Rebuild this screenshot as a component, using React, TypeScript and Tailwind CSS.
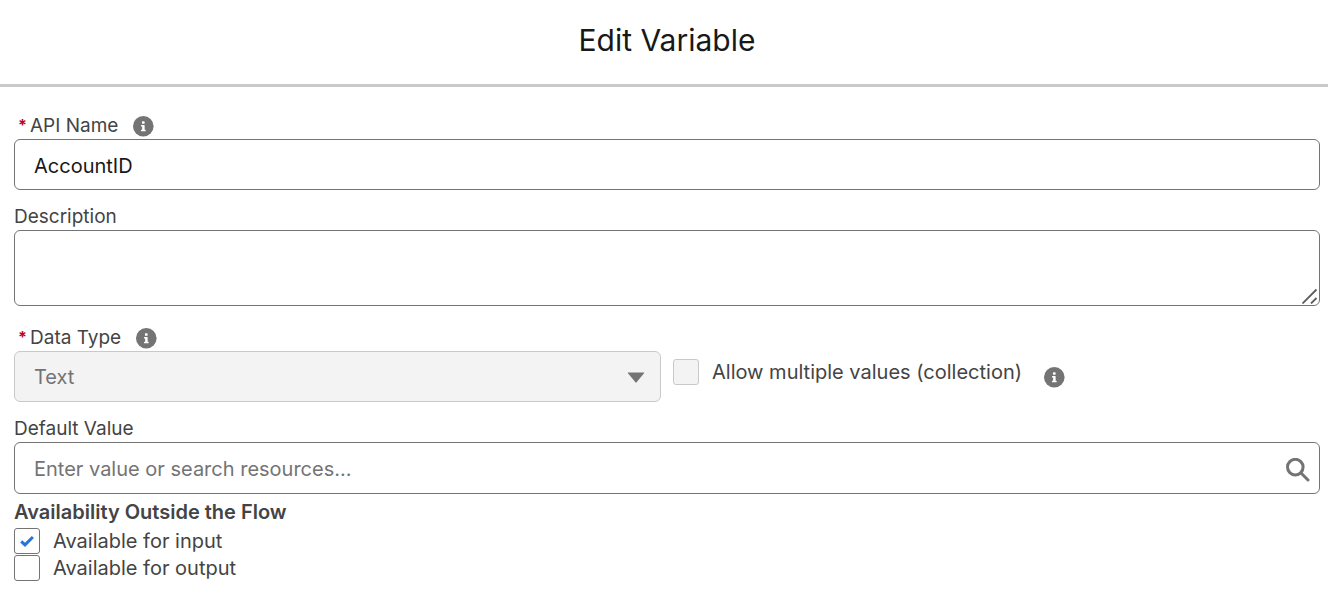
import { useState, type ReactNode } from "react";

const fieldClass =
  "block w-full rounded-md border border-[#747474] bg-white px-[19px] text-xl text-[#181818] placeholder:text-[#747474] placeholder:opacity-100";

function InfoButton({ label, className = "" }: { label: string; className?: string }) {
  return (
    <button type="button" aria-label={label} className={`flex size-[21px] shrink-0 ${className}`}>
      <svg viewBox="0 0 20 20" className="size-[21px]" aria-hidden="true">
        <circle cx="9.8" cy="9.8" r="9.8" fill="#747474" />
        <rect x="8.5" y="4.9" width="2.6" height="2.5" rx="0.8" fill="#fff" />
        <path
          d="M8.1 8.5h2.5c.3 0 .5.2.5.5v4h.5c.3 0 .5.2.5.5v.5c0 .3-.2.5-.5.5H8.1c-.3 0-.5-.2-.5-.5v-.5c0-.3.2-.5.5-.5h.6v-3h-.6c-.3 0-.5-.2-.5-.5V9c0-.3.2-.5.5-.5z"
          fill="#fff"
        />
      </svg>
    </button>
  );
}

function FieldLabel({
  htmlFor,
  required = false,
  info,
  children,
}: {
  htmlFor: string;
  required?: boolean;
  info?: string;
  children: ReactNode;
}) {
  return (
    <div className="flex h-[26px] items-center gap-[15px]">
      <label htmlFor={htmlFor} className="flex text-[19px] leading-6 text-[#444444]">
        {required && (
          <span aria-hidden="true" className="w-4 pl-1 text-base leading-[22px] font-bold text-[#ba0517]">
            *
          </span>
        )}
        {children}
      </label>
      {info && <InfoButton label={info} />}
    </div>
  );
}

function CheckOption({
  label,
  checked,
  disabled = false,
  onChange,
}: {
  label: string;
  checked: boolean;
  disabled?: boolean;
  onChange?: (value: boolean) => void;
}) {
  return (
    <label className="flex items-start gap-[13px] text-xl leading-[27px] text-[#444444]">
      <span className="grid shrink-0 place-items-center">
        <input
          type="checkbox"
          checked={checked}
          disabled={disabled}
          onChange={(e) => onChange?.(e.target.checked)}
          className="col-start-1 row-start-1 size-[26px] appearance-none rounded-[3px] border border-[#747474] bg-white disabled:border-[#c9c9c9] disabled:bg-[#f3f3f3]"
        />
        {checked && (
          <svg
            viewBox="0 0 14 12"
            className="pointer-events-none col-start-1 row-start-1 h-3 w-3.5"
            fill="none"
            stroke="#2574d9"
            strokeWidth="3"
            aria-hidden="true"
          >
            <path d="M1.2 6.4 5 9.9 12.9 2" />
          </svg>
        )}
      </span>
      {label}
    </label>
  );
}

export default function App() {
  const [name, setName] = useState("AccountID");
  const [description, setDescription] = useState("");
  const [value, setValue] = useState("");
  const [input, setInput] = useState(true);
  const [output, setOutput] = useState(false);

  return (
    <main className="min-h-screen bg-white font-['Inter',sans-serif]">
      <header className="border-b-3 border-[#c9c9c9] pt-5 pb-6 pl-1.5">
        <h1 className="text-center text-3xl leading-10 text-[#181818]">Edit Variable</h1>
      </header>

      <form className="pt-[26px] pr-2 pb-4 pl-3.5" onSubmit={(e) => e.preventDefault()}>
        <FieldLabel htmlFor="api-name" required info="API Name help">
          API Name
        </FieldLabel>
        <input
          id="api-name"
          required
          value={name}
          onChange={(e) => setName(e.target.value)}
          className={`${fieldClass} h-[51px] pt-0.5`}
        />

        <div className="mt-3.5">
          <FieldLabel htmlFor="description">Description</FieldLabel>
          <div className="relative">
            <textarea
              id="description"
              value={description}
              onChange={(e) => setDescription(e.target.value)}
              className={`${fieldClass} h-[76px] resize-none py-3`}
            />
            <svg
              viewBox="0 0 16 16"
              className="pointer-events-none absolute right-0.5 bottom-0.5 size-4"
              stroke="#5c5c5c"
              strokeWidth="1.8"
              aria-hidden="true"
            >
              <path d="M.5 15.5l14-14M9 15.5l5.5-5.5" />
            </svg>
          </div>
        </div>

        <div className="mt-[19px] grid grid-cols-2 gap-3">
          <div>
            <FieldLabel htmlFor="data-type" required info="Data Type help">
              Data Type
            </FieldLabel>
            <div className="relative">
              <select
                id="data-type"
                disabled
                defaultValue="Text"
                className="block h-[51px] w-full appearance-none rounded-md border border-[#c9c9c9] bg-[#f3f3f3] px-[19px] text-xl text-[#747474] opacity-100"
              >
                <option>Text</option>
              </select>
              <svg
                viewBox="0 0 18 11"
                className="pointer-events-none absolute top-[21px] right-4 h-[11px] w-[18px]"
                aria-hidden="true"
              >
                <path d="M1.3.5h15.4q.9 0 .3.8L9.6 10.2q-.6.7-1.2 0L1 1.3Q.4.5 1.3.5z" fill="#747474" />
              </svg>
            </div>
          </div>
          <div className="flex items-start gap-[22px] pt-[34px]">
            <CheckOption label="Allow multiple values (collection)" checked={false} disabled />
            <InfoButton label="Allow multiple values help" className="mt-2" />
          </div>
        </div>

        <div className="mt-3.5">
          <FieldLabel htmlFor="default-value">Default Value</FieldLabel>
          <div className="relative">
            <input
              id="default-value"
              value={value}
              onChange={(e) => setValue(e.target.value)}
              placeholder="Enter value or search resources..."
              className={`${fieldClass} h-[52px] pt-0.5 pr-12`}
            />
            <svg
              viewBox="0 0 24 24"
              className="pointer-events-none absolute top-4 right-2.5 size-6"
              fill="none"
              stroke="#747474"
              strokeWidth="3"
              strokeLinecap="round"
              aria-hidden="true"
            >
              <circle cx="9.3" cy="9.1" r="7.8" />
              <path d="m15 15 7 7" />
            </svg>
          </div>
        </div>

        <fieldset className="mt-1.5">
          <legend className="text-xl leading-6 font-semibold text-[#444444]">Availability Outside the Flow</legend>
          <div className="pt-1">
            <CheckOption label="Available for input" checked={input} onChange={setInput} />
            <CheckOption label="Available for output" checked={output} onChange={setOutput} />
          </div>
        </fieldset>
      </form>
    </main>
  );
}
